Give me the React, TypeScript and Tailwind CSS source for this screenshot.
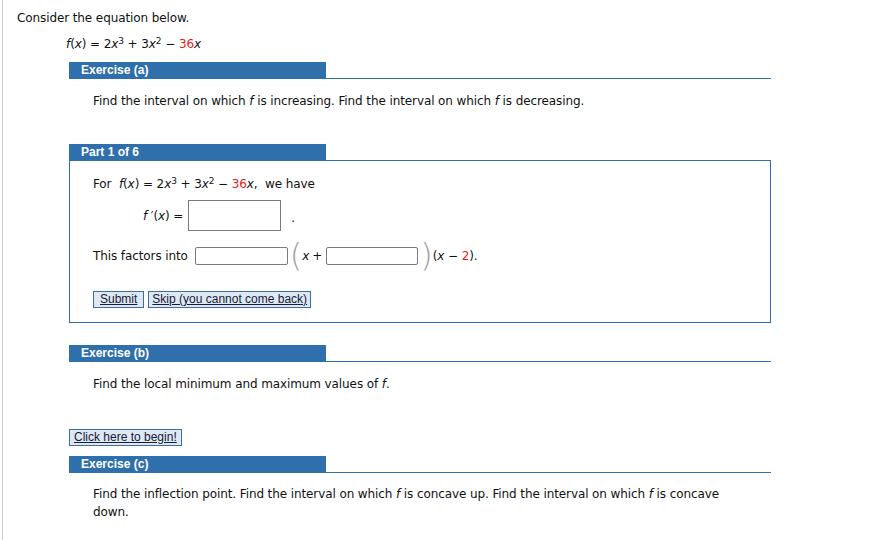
import React from "react";

const font = { fontFamily: '"DejaVu Sans", Verdana, sans-serif', letterSpacing: "-0.1px" };

function Header({ label }: { label: string }) {
  return (
    <div className="flex w-[702px] items-end">
      <div
        className="w-[257px] h-[17px] bg-[#2f6fab] text-white font-bold text-[12px] leading-[17px] pl-[12px] tracking-normal"
        style={{ fontFamily: '"Liberation Sans", Arial, sans-serif' }}
      >
        {label}
      </div>
      <div className="flex-1 border-b border-[#2f6fab]" />
    </div>
  );
}

function Btn({ children, px }: { children: React.ReactNode; px: string }) {
  return (
    <span
      className={
        "inline-block border border-[#3a6ea5] bg-[#dde8f3] text-[#1a1a3a] underline text-[12px] leading-[15px] tracking-normal " +
        px
      }
      style={{ fontFamily: '"Liberation Sans", Arial, sans-serif' }}
    >
      {children}
    </span>
  );
}

function I({ children }: { children: React.ReactNode }) {
  return <span className="italic">{children}</span>;
}

export default function App() {
  return (
    <div className="w-[883px] h-[540px] bg-white overflow-hidden text-[#111] text-[12px] leading-[16px]" style={font}>
      <div className="ml-[2px] h-full border-l border-[#cfcfcf] pl-[14px] pt-[10px]">
        <div>Consider the equation below.</div>
        <div className="mt-[10px] ml-[49px]">
          <I>f</I>(<I>x</I>) = 2<I>x</I>
          <sup className="text-[9px]">3</sup> + 3<I>x</I>
          <sup className="text-[9px]">2</sup> − <span className="text-[#e0201c]">36</span>
          <I>x</I>
        </div>
        <div className="ml-[52px] mt-[10px]">
          <Header label="Exercise (a)" />
          <div className="ml-[24px] mt-[14px]">
            Find the interval on which <I>f</I> is increasing. Find the interval on which <I>f</I> is decreasing.
          </div>
          <div className="mt-[35px]">
            <Header label="Part 1 of 6" />
            <div className="w-[702px] h-[162px] border border-t-0 border-[#2f6fab] pl-[23px] pt-[15px]">
              <div>
                For&nbsp; <I>f</I>(<I>x</I>) = 2<I>x</I>
                <sup className="text-[9px]">3</sup> + 3<I>x</I>
                <sup className="text-[9px]">2</sup> − <span className="text-[#e0201c]">36</span>
                <I>x</I>, &nbsp;we have
              </div>
              <div className="flex items-center mt-[8px] ml-[50px]">
                <span>
                  <I>f</I> ′(<I>x</I>) =
                </span>
                <span className="ml-[5px] inline-block w-[93px] h-[31px] border border-[#7a7a7a]" />
                <span className="ml-[10px] mt-[4px]">.</span>
              </div>
              <div className="flex items-center mt-[13px] h-[24px]">
                <span>This factors into</span>
                <span className="ml-[7px] inline-block w-[93px] h-[18px] border border-[#7a7a7a] rounded-[2px]" />
                <span className="ml-[2px] text-[32px] leading-[24px] text-[#a0a0a0] font-extralight -mt-[3px]">(</span>
                <I>x</I>
                <span className="ml-[3px]">+</span>
                <span className="ml-[4px] inline-block w-[92px] h-[18px] border border-[#7a7a7a] rounded-[2px]" />
                <span className="ml-[2px] text-[32px] leading-[24px] text-[#a0a0a0] font-extralight -mt-[3px]">)</span>
                <span>
                  (<I>x</I> − <span className="text-[#e0201c]">2</span>).
                </span>
              </div>
              <div className="flex gap-[4px] mt-[23px]">
                <Btn px="px-[6px]">Submit</Btn>
                <Btn px="px-[3px]">Skip (you cannot come back)</Btn>
              </div>
            </div>
          </div>
          <div className="mt-[22px]">
            <Header label="Exercise (b)" />
            <div className="ml-[24px] mt-[14px]">
              Find the local minimum and maximum values of <I>f</I>.
            </div>
            <div className="mt-[37px]">
              <Btn px="px-[4px]">Click here to begin!</Btn>
            </div>
          </div>
          <div className="mt-[10px]">
            <Header label="Exercise (c)" />
            <div className="ml-[24px] mt-[12px] w-[640px] leading-[18px]">
              Find the inflection point. Find the interval on which <I>f</I> is concave up. Find the interval on which{" "}
              <I>f</I> is concave down.
            </div>
          </div>
        </div>
      </div>
    </div>
  );
}
